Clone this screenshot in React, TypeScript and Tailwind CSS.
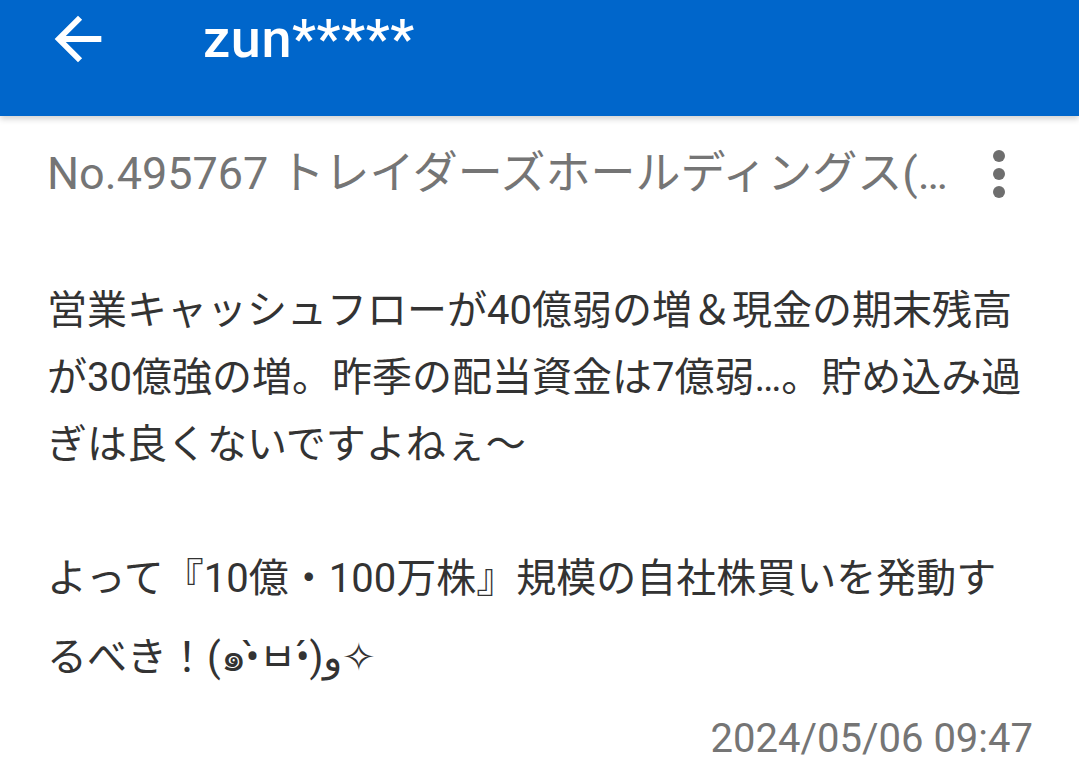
import React from 'react';

const FONT = "Roboto, 'Noto Sans CJK JP', 'Noto Sans', sans-serif";

function BackArrow() {
  return (
    <svg viewBox="0 0 24 24" className="h-[70px] w-[70px]" fill="#ffffff">
      <path d="M20 11H7.83l5.59-5.59L12 4l-8 8 8 8 1.41-1.41L7.83 13H20v-2z" />
    </svg>
  );
}

function Kebab() {
  return (
    <div className="flex flex-col items-center gap-[6px] w-[24px]">
      <span className="block h-[12px] w-[12px] rounded-full bg-[#6e6e6e]" />
      <span className="block h-[12px] w-[12px] rounded-full bg-[#6e6e6e]" />
      <span className="block h-[12px] w-[12px] rounded-full bg-[#6e6e6e]" />
    </div>
  );
}

export default function App() {
  return (
    <div className="min-h-screen w-full bg-white overflow-hidden" style={{ fontFamily: FONT }}>
      {/* ヘッダー */}
      <header className="h-[116px] bg-[#0066cb] shadow-[0_3px_6px_rgba(0,0,0,0.18)] relative z-10">
        <div className="flex h-[78px] items-center pl-[43px]">
          <BackArrow />
          <h1 className="ml-[90px] text-[54px] font-medium leading-none text-white tracking-[0.6px]">
            zun*****
          </h1>
        </div>
      </header>

      {/* 投稿 */}
      <main className="px-[47px]">
        <div className="mt-[28px] flex h-[60px] items-center">
          <p className="flex-1 truncate text-[45px] leading-[60px] text-[#757575]">
            No.495767 トレイダーズホールディングス(…
          </p>
          <div className="ml-[30px] mr-[21px]">
            <Kebab />
          </div>
        </div>

        <div className="mt-[73px] whitespace-nowrap text-[40px] leading-[67px] text-[#333333]">
          <p>
            営業キャッシュフローが40億弱の増＆現金の期末残高
            <br />
            が30億強の増。昨季の配当資金は7億弱…。貯め込み過
            <br />
            ぎは良くないですよねぇ～
          </p>
          <p className="mt-[67px]">
            よって『10億・100万株』規模の自社株買いを発動す
            <span className="block mt-[12px]">るべき！(๑•̀ㅂ•́)و✧</span>
          </p>
        </div>

        <div className="mt-[18px] flex justify-end">
          <span className="text-[40px] leading-[60px] text-[#757575] -mr-[1px]">2024/05/06 09:47</span>
        </div>
      </main>
    </div>
  );
}
